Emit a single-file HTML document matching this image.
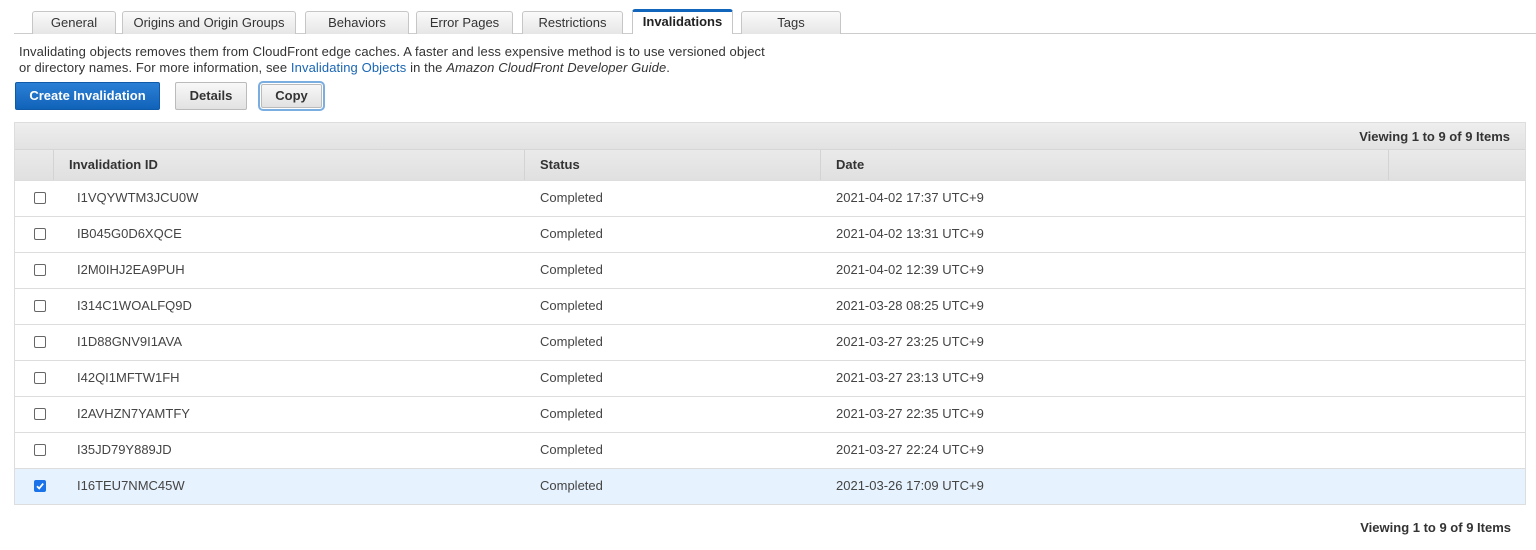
<!DOCTYPE html>
<html><head><meta charset="utf-8"><style>
*{box-sizing:border-box;margin:0;padding:0}
body{width:1536px;height:550px;background:#fff;font-family:"Liberation Sans",Arial,sans-serif;color:#333;position:relative;overflow:hidden}
.tabline{position:absolute;left:14px;right:0;top:33px;height:1px;background:#ccc}
.tab{position:absolute;top:11px;height:23px;border:1px solid #c6c6c6;border-bottom:none;border-radius:3px 3px 0 0;background:linear-gradient(#fafafa,#e6e6e6);font-size:13px;text-align:center;line-height:22px;color:#333}
.tab.act{background:#fff;border-top:3px solid #1166bb;top:9px;height:25px;font-weight:bold;line-height:20px;color:#222}
.desc{position:absolute;left:19px;top:44px;font-size:13px;line-height:16px;color:#333;letter-spacing:0.1px}
.desc a{color:#1a66b4;text-decoration:none}
.btn{position:absolute;top:82px;height:28px;border:1px solid #bbb;border-radius:2px;background:linear-gradient(#f8f8f8,#e2e2e2);font-size:13px;font-weight:bold;text-align:center;line-height:26px;color:#333}
.btn.blue{background:linear-gradient(#2b7fd4,#1063b8);border-color:#0f5aa8;color:#fff}
.tbl{position:absolute;left:14px;top:122px;width:1512px;border:1px solid #ddd;border-top:none}
.hb{height:28px;background:linear-gradient(#eee,#e2e2e2);border-bottom:1px solid #d6d6d6;font-size:13px;font-weight:bold;text-align:right;padding-right:15px;line-height:28px}
.hr{height:30px;background:linear-gradient(#eaeaea,#e0e0e0);display:flex;font-size:13px;font-weight:bold;line-height:30px}
.hr div{border-right:1px solid #d3d3d3}
.r{height:36px;display:flex;border-top:1px solid #ddd;font-size:13px;line-height:34px;color:#444}
.c0{width:39px;flex:none;position:relative}
.c1{width:471px;flex:none;padding-left:23px}
.c2{width:296px;flex:none;padding-left:15px}
.c3{width:568px;flex:none;padding-left:15px}
.c4{flex:1}
.hr .c1{padding-left:15px}
.cb{position:absolute;left:19px;top:11px;width:12px;height:12px;border:1px solid #666;border-radius:2px;background:#fff}
.sel{background:#e6f2fd}
.sel .cb{background:#1a73e8;border-color:#1a73e8}
.foot{position:absolute;right:25px;top:520px;font-size:13px;font-weight:bold;color:#333}
</style></head><body>
<div class="tabline"></div>
<div class="tab" style="left:32px;width:84px">General</div>
<div class="tab" style="left:122px;width:174px">Origins and Origin Groups</div>
<div class="tab" style="left:305px;width:104px">Behaviors</div>
<div class="tab" style="left:416px;width:97px">Error Pages</div>
<div class="tab" style="left:522px;width:101px">Restrictions</div>
<div class="tab act" style="left:632px;width:101px">Invalidations</div>
<div class="tab" style="left:741px;width:100px">Tags</div>
<div class="desc">Invalidating objects removes them from CloudFront edge caches. A faster and less expensive method is to use versioned object<br>or directory names. For more information, see <a>Invalidating Objects</a> in the <i>Amazon CloudFront Developer Guide</i>.</div>
<div class="btn blue" style="left:15px;width:145px">Create Invalidation</div>
<div class="btn" style="left:175px;width:72px">Details</div>
<div class="btn" style="left:261px;width:61px;top:84px;height:24px;line-height:22px;outline:2px solid #7aaee0;outline-offset:1px">Copy</div>
<div class="tbl">
<div class="hb" style="border-top:1px solid #ddd">Viewing 1 to 9 of 9 Items</div>
<div class="hr"><div class="c0"></div><div class="c1">Invalidation ID</div><div class="c2">Status</div><div class="c3">Date</div><div class="c4" style="border:none"></div></div>
<div class="r"><div class="c0"><span class="cb"></span></div><div class="c1">I1VQYWTM3JCU0W</div><div class="c2">Completed</div><div class="c3">2021-04-02 17:37 UTC+9</div><div class="c4"></div></div>
<div class="r"><div class="c0"><span class="cb"></span></div><div class="c1">IB045G0D6XQCE</div><div class="c2">Completed</div><div class="c3">2021-04-02 13:31 UTC+9</div><div class="c4"></div></div>
<div class="r"><div class="c0"><span class="cb"></span></div><div class="c1">I2M0IHJ2EA9PUH</div><div class="c2">Completed</div><div class="c3">2021-04-02 12:39 UTC+9</div><div class="c4"></div></div>
<div class="r"><div class="c0"><span class="cb"></span></div><div class="c1">I314C1WOALFQ9D</div><div class="c2">Completed</div><div class="c3">2021-03-28 08:25 UTC+9</div><div class="c4"></div></div>
<div class="r"><div class="c0"><span class="cb"></span></div><div class="c1">I1D88GNV9I1AVA</div><div class="c2">Completed</div><div class="c3">2021-03-27 23:25 UTC+9</div><div class="c4"></div></div>
<div class="r"><div class="c0"><span class="cb"></span></div><div class="c1">I42QI1MFTW1FH</div><div class="c2">Completed</div><div class="c3">2021-03-27 23:13 UTC+9</div><div class="c4"></div></div>
<div class="r"><div class="c0"><span class="cb"></span></div><div class="c1">I2AVHZN7YAMTFY</div><div class="c2">Completed</div><div class="c3">2021-03-27 22:35 UTC+9</div><div class="c4"></div></div>
<div class="r"><div class="c0"><span class="cb"></span></div><div class="c1">I35JD79Y889JD</div><div class="c2">Completed</div><div class="c3">2021-03-27 22:24 UTC+9</div><div class="c4"></div></div>
<div class="r sel"><div class="c0"><span class="cb"><svg width="10" height="10" viewBox="0 0 10 10" style="position:absolute;left:0;top:0"><path d="M2 5.2L4.2 7.4L8.2 2.6" stroke="#fff" stroke-width="1.8" fill="none"/></svg></span></div><div class="c1">I16TEU7NMC45W</div><div class="c2">Completed</div><div class="c3">2021-03-26 17:09 UTC+9</div><div class="c4"></div></div>
</div>
<div class="foot">Viewing 1 to 9 of 9 Items</div>
</body></html>
